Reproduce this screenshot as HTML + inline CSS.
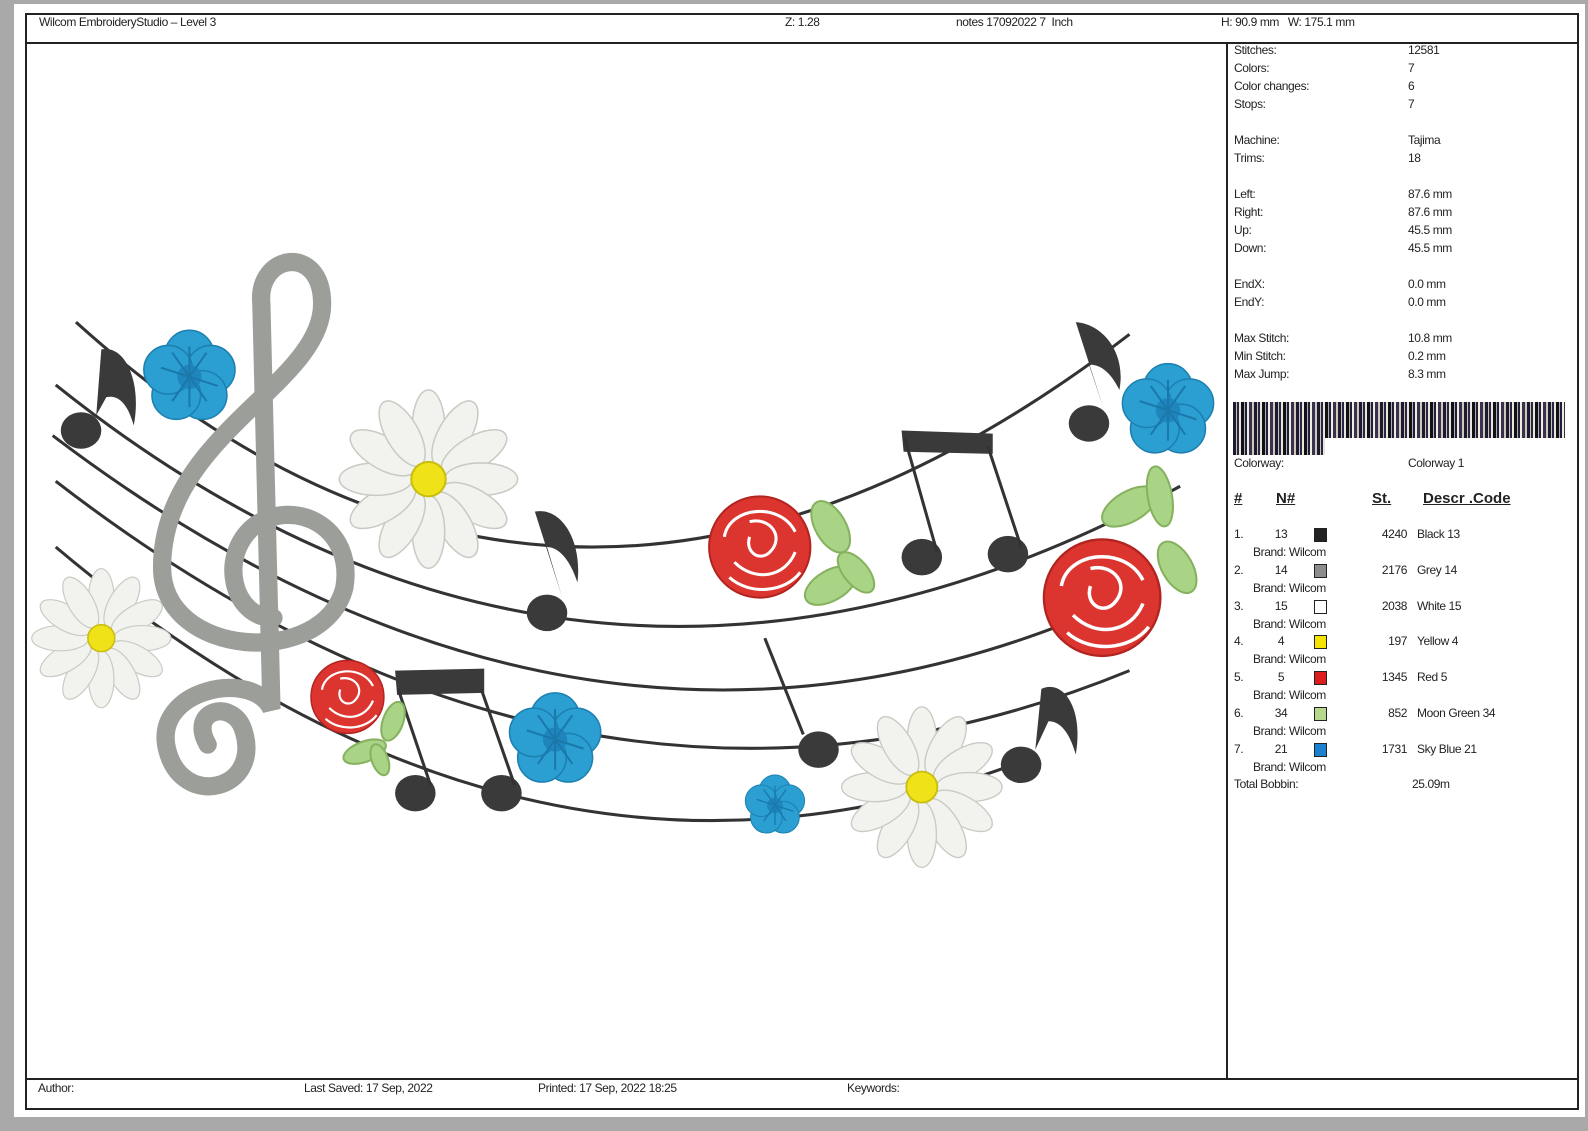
<!DOCTYPE html>
<html><head><meta charset="utf-8"><style>
*{margin:0;padding:0}
body{width:1588px;height:1131px;background:#a9a9a9;position:relative;overflow:hidden;font-family:"Liberation Sans",Arial,sans-serif;font-size:12px;color:#222;letter-spacing:-0.4px}
#page{position:absolute;left:14px;top:4px;width:1571px;height:1113px;background:#fff}
#frame{position:absolute;left:25px;top:13px;width:1550px;height:1093px;border:2px solid #222}
.hl{position:absolute;background:#222}
.t{position:absolute;white-space:nowrap;line-height:14px}
.bar{position:absolute;background:repeating-linear-gradient(90deg,#1b1a33 0 3px,#c9c3b0 3px 4px,#2c2446 4px 6px,#e8e6dc 6px 8px,#111 8px 11px,#a8b0c0 11px 12px,#231d35 12px 14px,#f0ede0 14px 16px,#3a3050 16px 19px,#d0c8b8 19px 21px)}
.sw{position:absolute;width:11px;height:12px;border:1.5px solid #222}
.h{position:absolute;font-weight:bold;font-size:15px;text-decoration:underline;letter-spacing:0}
</style></head><body>
<div id="page"></div>
<div id="frame"></div>
<div class="hl" style="left:25px;top:42px;width:1552px;height:2px"></div>
<div class="hl" style="left:25px;top:1078px;width:1552px;height:2px"></div>
<div class="hl" style="left:1226px;top:42px;width:2px;height:1037px"></div>

<div class="t" style="left:39px;top:15px">Wilcom EmbroideryStudio – Level 3</div>
<div class="t" style="left:785px;top:15px">Z: 1.28</div>
<div class="t" style="left:956px;top:15px">notes 17092022 7&nbsp; Inch</div>
<div class="t" style="left:1221px;top:15px">H: 90.9 mm&nbsp;&nbsp; W: 175.1 mm</div>

<div class="t" style="left:38px;top:1081px">Author:</div>
<div class="t" style="left:304px;top:1081px">Last Saved: 17 Sep, 2022</div>
<div class="t" style="left:538px;top:1081px">Printed: 17 Sep, 2022 18:25</div>
<div class="t" style="left:847px;top:1081px">Keywords:</div>

<div class="t" style="left:1234px;top:43px">Stitches:</div><div class="t" style="left:1408px;top:43px">12581</div>
<div class="t" style="left:1234px;top:61px">Colors:</div><div class="t" style="left:1408px;top:61px">7</div>
<div class="t" style="left:1234px;top:79px">Color changes:</div><div class="t" style="left:1408px;top:79px">6</div>
<div class="t" style="left:1234px;top:97px">Stops:</div><div class="t" style="left:1408px;top:97px">7</div>
<div class="t" style="left:1234px;top:133px">Machine:</div><div class="t" style="left:1408px;top:133px">Tajima</div>
<div class="t" style="left:1234px;top:151px">Trims:</div><div class="t" style="left:1408px;top:151px">18</div>
<div class="t" style="left:1234px;top:187px">Left:</div><div class="t" style="left:1408px;top:187px">87.6 mm</div>
<div class="t" style="left:1234px;top:205px">Right:</div><div class="t" style="left:1408px;top:205px">87.6 mm</div>
<div class="t" style="left:1234px;top:223px">Up:</div><div class="t" style="left:1408px;top:223px">45.5 mm</div>
<div class="t" style="left:1234px;top:241px">Down:</div><div class="t" style="left:1408px;top:241px">45.5 mm</div>
<div class="t" style="left:1234px;top:277px">EndX:</div><div class="t" style="left:1408px;top:277px">0.0 mm</div>
<div class="t" style="left:1234px;top:295px">EndY:</div><div class="t" style="left:1408px;top:295px">0.0 mm</div>
<div class="t" style="left:1234px;top:331px">Max Stitch:</div><div class="t" style="left:1408px;top:331px">10.8 mm</div>
<div class="t" style="left:1234px;top:349px">Min Stitch:</div><div class="t" style="left:1408px;top:349px">0.2 mm</div>
<div class="t" style="left:1234px;top:367px">Max Jump:</div><div class="t" style="left:1408px;top:367px">8.3 mm</div>

<div class="bar" style="left:1233px;top:402px;width:332px;height:36px"></div>
<div class="bar" style="left:1233px;top:438px;width:92px;height:17px"></div>

<div class="t" style="left:1234px;top:456px">Colorway:</div><div class="t" style="left:1408px;top:456px">Colorway 1</div>
<div class="h" style="left:1234px;top:490px">#</div>
<div class="h" style="left:1276px;top:490px">N#</div>
<div class="h" style="left:1372px;top:490px">St.</div>
<div class="h" style="left:1423px;top:490px">Descr .Code</div>

<div style="position:absolute;left:0;top:527px">
<div class="t" style="left:1234px;top:0">1.</div><div class="t" style="left:1266px;top:0;width:30px;text-align:center">13</div><div class="sw" style="left:1314px;top:1px;background:#222"></div><div class="t" style="left:1360px;top:0;width:47px;text-align:right">4240</div><div class="t" style="left:1417px;top:0">Black 13</div><div class="t" style="left:1253px;top:18px">Brand: Wilcom</div>
</div>
<div style="position:absolute;left:0;top:563px">
<div class="t" style="left:1234px;top:0">2.</div><div class="t" style="left:1266px;top:0;width:30px;text-align:center">14</div><div class="sw" style="left:1314px;top:1px;background:#8c8c8c"></div><div class="t" style="left:1360px;top:0;width:47px;text-align:right">2176</div><div class="t" style="left:1417px;top:0">Grey 14</div><div class="t" style="left:1253px;top:18px">Brand: Wilcom</div>
</div>
<div style="position:absolute;left:0;top:599px">
<div class="t" style="left:1234px;top:0">3.</div><div class="t" style="left:1266px;top:0;width:30px;text-align:center">15</div><div class="sw" style="left:1314px;top:1px;background:#fff"></div><div class="t" style="left:1360px;top:0;width:47px;text-align:right">2038</div><div class="t" style="left:1417px;top:0">White 15</div><div class="t" style="left:1253px;top:18px">Brand: Wilcom</div>
</div>
<div style="position:absolute;left:0;top:634px">
<div class="t" style="left:1234px;top:0">4.</div><div class="t" style="left:1266px;top:0;width:30px;text-align:center">4</div><div class="sw" style="left:1314px;top:1px;background:#f5e400"></div><div class="t" style="left:1360px;top:0;width:47px;text-align:right">197</div><div class="t" style="left:1417px;top:0">Yellow 4</div><div class="t" style="left:1253px;top:18px">Brand: Wilcom</div>
</div>
<div style="position:absolute;left:0;top:670px">
<div class="t" style="left:1234px;top:0">5.</div><div class="t" style="left:1266px;top:0;width:30px;text-align:center">5</div><div class="sw" style="left:1314px;top:1px;background:#dd1c1c"></div><div class="t" style="left:1360px;top:0;width:47px;text-align:right">1345</div><div class="t" style="left:1417px;top:0">Red 5</div><div class="t" style="left:1253px;top:18px">Brand: Wilcom</div>
</div>
<div style="position:absolute;left:0;top:706px">
<div class="t" style="left:1234px;top:0">6.</div><div class="t" style="left:1266px;top:0;width:30px;text-align:center">34</div><div class="sw" style="left:1314px;top:1px;background:#b5d88a"></div><div class="t" style="left:1360px;top:0;width:47px;text-align:right">852</div><div class="t" style="left:1417px;top:0">Moon Green 34</div><div class="t" style="left:1253px;top:18px">Brand: Wilcom</div>
</div>
<div style="position:absolute;left:0;top:742px">
<div class="t" style="left:1234px;top:0">7.</div><div class="t" style="left:1266px;top:0;width:30px;text-align:center">21</div><div class="sw" style="left:1314px;top:1px;background:#1a80d0"></div><div class="t" style="left:1360px;top:0;width:47px;text-align:right">1731</div><div class="t" style="left:1417px;top:0">Sky Blue 21</div><div class="t" style="left:1253px;top:18px">Brand: Wilcom</div>
</div>
<div class="t" style="left:1234px;top:777px">Total Bobbin:</div><div class="t" style="left:1412px;top:777px">25.09m</div>

<svg style="position:absolute;left:0;top:0" width="1588" height="1131">
<defs>
<g id="daisy">
<g fill="#f2f3ee" stroke="#c8cac4" stroke-width="1.5">
<ellipse cx="0" cy="-52" rx="16" ry="36"/>
<ellipse cx="0" cy="-52" rx="16" ry="36" transform="rotate(30)"/>
<ellipse cx="0" cy="-52" rx="16" ry="36" transform="rotate(60)"/>
<ellipse cx="0" cy="-52" rx="16" ry="36" transform="rotate(90)"/>
<ellipse cx="0" cy="-52" rx="16" ry="36" transform="rotate(120)"/>
<ellipse cx="0" cy="-52" rx="16" ry="36" transform="rotate(150)"/>
<ellipse cx="0" cy="-52" rx="16" ry="36" transform="rotate(180)"/>
<ellipse cx="0" cy="-52" rx="16" ry="36" transform="rotate(210)"/>
<ellipse cx="0" cy="-52" rx="16" ry="36" transform="rotate(240)"/>
<ellipse cx="0" cy="-52" rx="16" ry="36" transform="rotate(270)"/>
<ellipse cx="0" cy="-52" rx="16" ry="36" transform="rotate(300)"/>
<ellipse cx="0" cy="-52" rx="16" ry="36" transform="rotate(330)"/>
</g>
<circle r="17" fill="#f0e218" stroke="#c9be10" stroke-width="2"/>
</g>
<g id="blue">
<g fill="#2b9fd2" stroke="#1c7fb0" stroke-width="1.5">
<circle cx="0" cy="-22" r="24"/><circle cx="21" cy="-7" r="24"/><circle cx="13" cy="18" r="24"/><circle cx="-13" cy="18" r="24"/><circle cx="-21" cy="-7" r="24"/>
</g>
<circle r="12" fill="#1f86bd"/>
<path d="M0,-30V30M-28,-9L28,9M-17,24L17,-24M17,24L-17,-24" stroke="#1a78aa" stroke-width="2"/>
</g>
<g id="rose">
<circle r="50" fill="#dc3530" stroke="#b22420" stroke-width="2"/>
<path d="M-35,-10 C-30,-40 20,-45 35,-15 M-25,15 C-5,35 25,30 35,5 M-10,-25 C10,-30 25,-10 10,5 C0,15 -15,5 -10,-10" fill="none" stroke="#fff" stroke-width="3"/>
<path d="M-30,30 C-10,48 25,45 40,25" fill="none" stroke="#fff" stroke-width="3"/>
</g>
</defs>
<g transform="scale(1.013)">
<g fill="none" stroke="#333" stroke-width="3">
<path d="M75,318 Q560,756 1115,330"/>
<path d="M55,380 Q580,800 1165,480"/>
<path d="M52,430 Q546,805 1040,620"/>
<path d="M55,475 Q580,881 1115,662"/>
<path d="M55,540 Q520,932 1000,755"/>
</g>
<path d="M205,735 C185,700 230,690 240,720 C260,780 180,800 165,740 C150,680 250,660 268,700 L258,300 C253,250 318,240 318,300 C318,380 160,430 160,560 C160,650 320,660 340,580 C350,520 290,490 250,520 C215,550 230,610 270,610" fill="none" stroke="#9b9e99" stroke-width="18" stroke-linecap="round"/>
<g fill="#3a3a3a">
<ellipse cx="80" cy="425" rx="20" ry="18"/>
<ellipse cx="540" cy="605" rx="20" ry="18"/>
<ellipse cx="910" cy="550" rx="20" ry="18"/>
<ellipse cx="995" cy="547" rx="20" ry="18"/>
<ellipse cx="1075" cy="418" rx="20" ry="18"/>
<ellipse cx="808" cy="740" rx="20" ry="18"/>
<ellipse cx="410" cy="783" rx="20" ry="18"/>
<ellipse cx="495" cy="783" rx="20" ry="18"/>
<ellipse cx="1008" cy="755" rx="20" ry="18"/>
<path d="M95,410 L100,345 C125,340 140,380 132,420 C125,395 115,390 105,392Z"/>
<path d="M555,590 L528,505 C555,500 575,535 570,575 C562,550 550,540 540,540Z"/>
<path d="M1090,405 L1062,318 C1090,320 1112,350 1105,385 C1095,365 1085,360 1075,360Z"/>
<path d="M1022,740 L1028,680 C1050,670 1070,700 1062,745 C1055,720 1045,712 1035,712Z"/>
<path d="M890,425 L980,428 L980,448 L892,446Z"/>
<path d="M390,662 L478,660 L478,684 L392,686Z"/>
</g>
<g stroke="#333" stroke-width="3" fill="none">
<path d="M925,545 L893,432"/><path d="M1008,540 L975,440"/>
<path d="M393,680 L425,775"/><path d="M475,680 L508,775"/>
<path d="M793,725 L755,630"/>
</g>
<g fill="#a9d385" stroke="#86b260" stroke-width="2">
<ellipse cx="820" cy="520" rx="15" ry="28" transform="rotate(-30 820 520)"/>
<ellipse cx="820" cy="578" rx="15" ry="28" transform="rotate(60 820 578)"/>
<ellipse cx="845" cy="565" rx="12" ry="24" transform="rotate(-40 845 565)"/>
<ellipse cx="1115" cy="500" rx="15" ry="30" transform="rotate(60 1115 500)"/>
<ellipse cx="1145" cy="490" rx="12" ry="30" transform="rotate(-10 1145 490)"/>
<ellipse cx="1162" cy="560" rx="15" ry="28" transform="rotate(-30 1162 560)"/>
<ellipse cx="388" cy="712" rx="10" ry="20" transform="rotate(20 388 712)"/>
<ellipse cx="360" cy="742" rx="10" ry="22" transform="rotate(70 360 742)"/>
<ellipse cx="375" cy="750" rx="8" ry="16" transform="rotate(-20 375 750)"/>
</g>
<use href="#daisy" transform="translate(423,473)"/>
<use href="#daisy" transform="translate(100,630) scale(0.78)"/>
<use href="#daisy" transform="translate(910,777) scale(0.9)"/>
<use href="#blue" transform="translate(187,372)"/>
<use href="#blue" transform="translate(548,730)"/>
<use href="#blue" transform="translate(765,795) scale(0.65)"/>
<use href="#blue" transform="translate(1153,405)"/>
<use href="#rose" transform="translate(750,540) scale(1)"/>
<use href="#rose" transform="translate(1088,590) scale(1.15)"/>
<use href="#rose" transform="translate(343,688) scale(0.72)"/>
</g>
</svg>
</body></html>
